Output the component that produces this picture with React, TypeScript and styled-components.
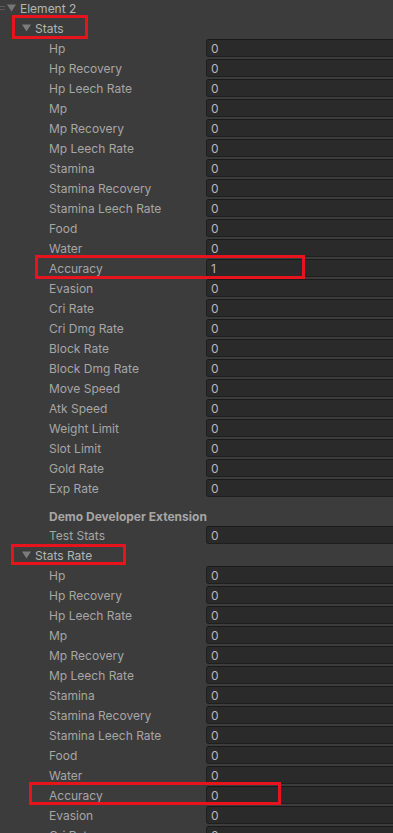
import React from "react";
import styled, { createGlobalStyle } from "styled-components";

const GlobalStyle = createGlobalStyle`
  html, body {
    margin: 0;
    padding: 0;
    background: #3c3c3c;
    overflow: hidden;
  }
  body {
    font-family: Inter, "Noto Sans", "Liberation Sans", sans-serif;
    font-size: 12px;
    -webkit-font-smoothing: antialiased;
  }
`;

const Inspector = styled.div`
  display: flex;
  flex-direction: column;
  margin-top: -1px;
  width: 393px;
  overflow: hidden;
`;

const FoldoutRow = styled.div<{ $indent: number }>`
  position: relative;
  height: 18px;
  margin-bottom: 2px;
  display: flex;
  align-items: center;
  padding-left: ${(p) => p.$indent}px;
  color: #b4b4b4;
  white-space: nowrap;
`;

const Handle = styled.span`
  position: absolute;
  left: 0;
  top: 7px;
  width: 5px;
  height: 4px;
  border-top: 1px solid #5c5c5c;
  border-bottom: 1px solid #5c5c5c;
  box-sizing: border-box;
`;

const ArrowIcon = styled.svg`
  width: 9px;
  height: 8px;
  margin-right: 4px;
  flex: none;
`;

const PropertyRow = styled.div`
  position: relative;
  height: 18px;
  margin-bottom: 2px;
  display: grid;
  grid-template-columns: 206px 1fr;
  align-items: center;
`;

const Label = styled.span`
  padding-left: 49px;
  color: #a6a6a6;
  white-space: nowrap;
`;

const Field = styled.div`
  height: 18px;
  box-sizing: border-box;
  width: 240px;
  background: #2a2a2a;
  border: 1px solid #1f1f1f;
  border-top-color: #1a1a1a;
  border-radius: 3px;
  color: #b8b8b8;
  display: flex;
  align-items: center;
  padding-left: 4px;
`;

const HeaderRow = styled.div`
  height: 20px;
  margin-top: 7px;
  display: flex;
  align-items: center;
  padding-left: 49px;
  color: #a6a6a6;
  font-weight: 700;
  white-space: nowrap;
`;

const Highlight = styled.span<{ $left: number; $top: number; $width: number; $height: number }>`
  position: absolute;
  left: ${(p) => p.$left}px;
  top: ${(p) => p.$top}px;
  width: ${(p) => p.$width}px;
  height: ${(p) => p.$height}px;
  border: 3px solid #e8141d;
  box-sizing: border-box;
  pointer-events: none;
`;

const Arrow = ({ color }: { color: string }) => (
  <ArrowIcon viewBox="0 0 9 8">
    <polygon points="0,0.5 9,0.5 4.5,7.5" fill={color} />
  </ArrowIcon>
);

const statNames = [
  "Hp",
  "Hp Recovery",
  "Hp Leech Rate",
  "Mp",
  "Mp Recovery",
  "Mp Leech Rate",
  "Stamina",
  "Stamina Recovery",
  "Stamina Leech Rate",
  "Food",
  "Water",
  "Accuracy",
  "Evasion",
  "Cri Rate",
  "Cri Dmg Rate",
  "Block Rate",
  "Block Dmg Rate",
  "Move Speed",
  "Atk Speed",
  "Weight Limit",
  "Slot Limit",
  "Gold Rate",
  "Exp Rate",
];

type Box = { left: number; top: number; width: number; height: number };

const Property = ({ name, value, box }: { name: string; value: string; box?: Box }) => (
  <PropertyRow>
    <Label>{name}</Label>
    <Field>{value}</Field>
    {box && <Highlight $left={box.left} $top={box.top} $width={box.width} $height={box.height} />}
  </PropertyRow>
);

export default function App() {
  const rateNames = statNames.slice(0, 14);
  return (
    <>
      <GlobalStyle />
      <Inspector>
        <FoldoutRow $indent={7}>
          <Handle />
          <Arrow color="#767676" />
          Element 2
        </FoldoutRow>
        <FoldoutRow $indent={22}>
          <Arrow color="#7c7c7c" />
          Stats
          <Highlight $left={12} $top={-4} $width={76} $height={24} />
        </FoldoutRow>
        {statNames.map((n) => (
          <Property
            key={"s" + n}
            name={n}
            value={n === "Accuracy" ? "1" : "0"}
            box={n === "Accuracy" ? { left: 35, top: -4, width: 270, height: 24 } : undefined}
          />
        ))}
        <HeaderRow>Demo Developer Extension</HeaderRow>
        <Property name="Test Stats" value="0" />
        <FoldoutRow $indent={22}>
          <Arrow color="#7c7c7c" />
          Stats Rate
          <Highlight $left={11} $top={-2} $width={115} $height={21} />
        </FoldoutRow>
        {rateNames.map((n) => (
          <Property
            key={"r" + n}
            name={n}
            value="0"
            box={n === "Accuracy" ? { left: 29, top: -4, width: 252, height: 23 } : undefined}
          />
        ))}
      </Inspector>
    </>
  );
}
